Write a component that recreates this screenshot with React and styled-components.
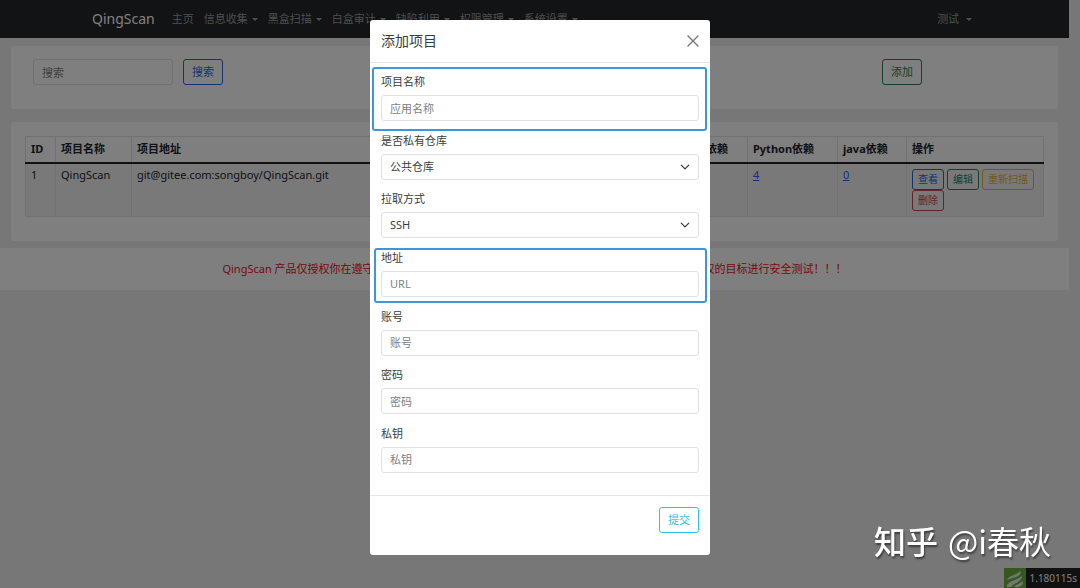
import React from 'react';
import styled, {createGlobalStyle, css} from 'styled-components';

const GlobalStyle = createGlobalStyle`
    * {
        box-sizing: border-box;
    }
    body {
        margin: 0;
        min-height: 100vh;
        background: #f0eef0;
        color: #212529;
        font-family: "Noto Sans", "Noto Sans CJK SC", sans-serif;
        font-size: 11px;
        line-height: 16px;
        overflow: hidden;
    }
    button, input, select {
        font: inherit;
    }
`;

const colors = {
  primary: '#1f68dc',
  success: '#2b7d58',
  warning: '#e5b53a',
  danger: '#d04450',
  info: '#2cc6e2',
};

const Page = styled.div`
    padding-right: 11px;
`;
const Navbar = styled.nav`
    display: flex;
    align-items: center;
    height: 38px;
    padding: 0 92px;
    background: #242628;
`;
const Brand = styled.a`
    margin-right: 12px;
    color: #fff;
    font-size: 14px;
    line-height: 20px;
    text-decoration: none;
`;
const NavList = styled.div`
    display: flex;
    flex: 1;
`;
const NavLink = styled.a`
    display: flex;
    align-items: center;
    padding: 0 5px;
    color: #9b9d9e;
    text-decoration: none;
    white-space: pre;
`;
const Caret = styled.span`
    margin-left: 4px;
    border-top: 3px solid currentColor;
    border-left: 3px solid transparent;
    border-right: 3px solid transparent;
`;
const Card = styled.section`
    margin: 0 11px;
    border-radius: 3px;
    background: #fff;
`;
const SearchCard = styled(Card)`
    display: flex;
    align-items: flex-start;
    justify-content: space-between;
    margin-top: 8px;
    padding: 13px 136px 24px 22px;
`;
const TableCard = styled(Card)`
    margin-top: 13px;
    padding: 14px 14px 24px;
`;
const SearchForm = styled.form`
    display: flex;
    gap: 10px;
`;

const control = css`
    display: block;
    width: 100%;
    height: 26px;
    margin: 0;
    padding: 0 8px;
    border: 1px solid #dfe2e5;
    border-radius: 3px;
    outline: 0;
    background: #fff;
    color: #3a3d40;
`;
const Input = styled.input`
    ${control}
    &::placeholder {
        color: #7d8185;
        opacity: 1;
    }
`;
const SearchInput = styled(Input)`
    width: 140px;
`;
const Button = styled.button`
    height: ${p => p.$small ? 21 : 26}px;
    padding: 0 ${p => p.$small ? 5 : 8}px;
    border: 1px solid ${p => colors[p.$variant]};
    border-radius: 3px;
    background: transparent;
    color: ${p => colors[p.$variant]};
    font-size: ${p => p.$small ? 10 : 11}px;
    line-height: 16px;
`;

const Table = styled.table`
    width: 100%;
    table-layout: fixed;
    border-collapse: collapse;
    border: 1px solid #dee2e6;
`;
const Col = styled.col`
    width: ${p => p.$width ? `${p.$width}px` : 'auto'};
`;
const Th = styled.th`
    height: 26px;
    padding: 0 5px;
    border: 1px solid #dee2e6;
    border-bottom: 2px solid #212529;
    text-align: left;
    font-weight: 700;
`;
const Td = styled.td`
    height: 54px;
    padding: 3px 5px;
    border: 1px solid #dee2e6;
    background: #f2f2f2;
    vertical-align: top;
`;
const CountLink = styled.a`
    color: ${colors.primary};
`;
const Actions = styled.div`
    display: flex;
    flex-wrap: wrap;
    gap: 0 3px;
    padding-top: 2px;
`;
const Notice = styled.footer`
    margin-top: 7px;
    padding: 13px 0;
    background: #fff;
    color: #f0101c;
    text-align: center;
    white-space: nowrap;
`;

const Trace = styled.div`
    position: fixed;
    right: 0;
    bottom: 0;
    display: flex;
    height: 20px;
    background: #232323;
    color: #fff;
    font-size: 10px;
    line-height: 20px;
`;
const TraceTime = styled.span`
    padding: 0 3px;
`;

const Backdrop = styled.div`
    position: fixed;
    inset: 0;
    display: flex;
    align-items: flex-start;
    justify-content: center;
    padding-top: 20px;
    background: rgba(0, 0, 0, .5);
`;
const Dialog = styled.form`
    width: 340px;
    border-radius: 3px;
    background: #fff;
    color: #3a3d40;
`;
const DialogHeader = styled.header`
    display: flex;
    align-items: center;
    justify-content: space-between;
    height: 43px;
    padding: 0 11px;
    border-bottom: 1px solid #e3e6e9;
`;
const DialogTitle = styled.h2`
    margin: 0;
    font-size: 14px;
    font-weight: 400;
    line-height: 20px;
`;
const CloseButton = styled.button`
    display: flex;
    padding: 0;
    border: 0;
    background: none;
    color: #777;
`;
const Fields = styled.div`
    display: flex;
    flex-direction: column;
    justify-content: space-between;
    height: 432px;
    padding: 11px 11px 22px;
`;
const Field = styled.div`
    position: relative;
`;
const Label = styled.label`
    display: block;
    margin-bottom: 5px;
`;
const Highlight = styled.span`
    position: absolute;
    inset: ${p => p.$inset};
    border: 2px solid #3c96d8;
    border-radius: 3px;
    pointer-events: none;
`;
const SelectBox = styled.div`
    display: grid;
    align-items: center;
    > * {
        grid-area: 1 / 1;
    }
    > svg {
        justify-self: end;
        margin-right: 9px;
        pointer-events: none;
    }
`;
const Select = styled.select`
    ${control}
    appearance: none;
`;
const DialogFooter = styled.footer`
    display: flex;
    justify-content: flex-end;
    padding: 11px 11px 22px;
    border-top: 1px solid #e3e6e9;
`;
const Watermark = styled.div`
    position: fixed;
    right: 29px;
    bottom: 24px;
    display: flex;
    align-items: center;
    gap: 10px;
    color: #fff;
    font-family: "Noto Sans CJK SC", sans-serif;
    font-size: 32px;
    line-height: 48px;
    text-shadow: 1px 2px 2px rgba(0, 0, 0, .5);
`;
const WatermarkLogo = styled.span`
    font-weight: 500;
`;

const menus = ['信息收集', '黑盒扫描', '白盒审计', '缺陷利用', '权限管理', '系统设置'];

const columns = [
  {title: 'ID', width: 30},
  {title: '项目名称', width: 76},
  {title: '项目地址'},
  {title: 'PHP依赖', width: 69},
  {title: 'Python依赖', width: 90},
  {title: 'java依赖', width: 69},
  {title: '操作', width: 137},
];

const fields = [
  {id: 'name', label: '项目名称', placeholder: '应用名称', highlight: '-7px -8px -10px -9px'},
  {id: 'private', label: '是否私有仓库', options: ['公共仓库', '私有仓库']},
  {id: 'pull', label: '拉取方式', options: ['SSH', 'HTTPS']},
  {id: 'url', label: '地址', placeholder: 'URL', highlight: '-2px -8px -6px -7px'},
  {id: 'account', label: '账号', placeholder: '账号'},
  {id: 'password', label: '密码', placeholder: '密码'},
  {id: 'key', label: '私钥', placeholder: '私钥'},
];

const FormField = ({id, label, placeholder, options, highlight}) => (
  <Field>
    <Label htmlFor={id}>{label}</Label>
    {options ?
      <SelectBox>
        <Select id={id}>
          {options.map((o) => <option key={o}>{o}</option>)}
        </Select>
        <svg width="10" height="10" viewBox="0 0 16 16" fill="none" stroke="#343a40" strokeWidth="2" strokeLinecap="round" strokeLinejoin="round">
          <path d="M2 5l6 6 6-6"/>
        </svg>
      </SelectBox>
      : <Input id={id} placeholder={placeholder}/>}
    {highlight ? <Highlight $inset={highlight}/> : null}
  </Field>
);

const App = () => (
  <>
    <GlobalStyle/>
    <Page>
      <Navbar>
        <Brand href="#">QingScan</Brand>
        <NavList>
          <NavLink href="#">主页</NavLink>
          {menus.map((m) => (
            <NavLink href="#" key={m}>{m}<Caret/></NavLink>
          ))}
        </NavList>
        <NavLink href="#">{'测试 '}<Caret/></NavLink>
      </Navbar>

      <SearchCard>
        <SearchForm>
          <SearchInput placeholder="搜索" aria-label="搜索"/>
          <Button type="button" $variant="primary">搜索</Button>
        </SearchForm>
        <Button type="button" $variant="success">添加</Button>
      </SearchCard>

      <TableCard>
        <Table>
          <colgroup>
            {columns.map((c) => <Col key={c.title} $width={c.width}/>)}
          </colgroup>
          <thead>
            <tr>
              {columns.map((c) => <Th key={c.title}>{c.title}</Th>)}
            </tr>
          </thead>
          <tbody>
            <tr>
              <Td>1</Td>
              <Td>QingScan</Td>
              <Td>git@gitee.com:songboy/QingScan.git</Td>
              <Td/>
              <Td><CountLink href="#">4</CountLink></Td>
              <Td><CountLink href="#">0</CountLink></Td>
              <Td>
                <Actions>
                  <Button type="button" $small $variant="primary">查看</Button>
                  <Button type="button" $small $variant="success">编辑</Button>
                  <Button type="button" $small $variant="warning">重新扫描</Button>
                  <Button type="button" $small $variant="danger">删除</Button>
                </Actions>
              </Td>
            </tr>
          </tbody>
        </Table>
      </TableCard>

      <Notice>
        QingScan 产品仅授权你在遵守《中华人民共和国网络安全法》前提下使用，并请仅对已获得书面授权的目标进行安全测试！！！
      </Notice>
    </Page>

    <Trace>
      <svg width="22" height="20" viewBox="0 0 22 20">
        <rect width="22" height="20" fill="#6cae3f"/>
        <path d="M3 12C5 7 11 8 17 3C17 9 10 9 3 12Z" fill="#e4f1da"/>
        <path d="M3 17C6 12 12 13 18 8C18 14 11 14 7 19H3Z" fill="#e4f1da"/>
        <path d="M10 19C12 16 16 16 19 13C19 17 17 18 15 19Z" fill="#e4f1da"/>
      </svg>
      <TraceTime>1.180115s</TraceTime>
    </Trace>

    <Backdrop>
      <Dialog role="dialog" aria-labelledby="dialog-title">
        <DialogHeader>
          <DialogTitle id="dialog-title">添加项目</DialogTitle>
          <CloseButton type="button" aria-label="关闭">
            <svg width="12" height="12" viewBox="0 0 12 12" stroke="currentColor" strokeWidth="1.4" strokeLinecap="round">
              <path d="M1 1l10 10M11 1L1 11"/>
            </svg>
          </CloseButton>
        </DialogHeader>
        <Fields>
          {fields.map((f) => <FormField key={f.id} {...f}/>)}
        </Fields>
        <DialogFooter>
          <Button type="button" $variant="info">提交</Button>
        </DialogFooter>
      </Dialog>
    </Backdrop>

    <Watermark>
      <WatermarkLogo>知乎</WatermarkLogo>
      <span>@i春秋</span>
    </Watermark>
  </>
);

export default App;
